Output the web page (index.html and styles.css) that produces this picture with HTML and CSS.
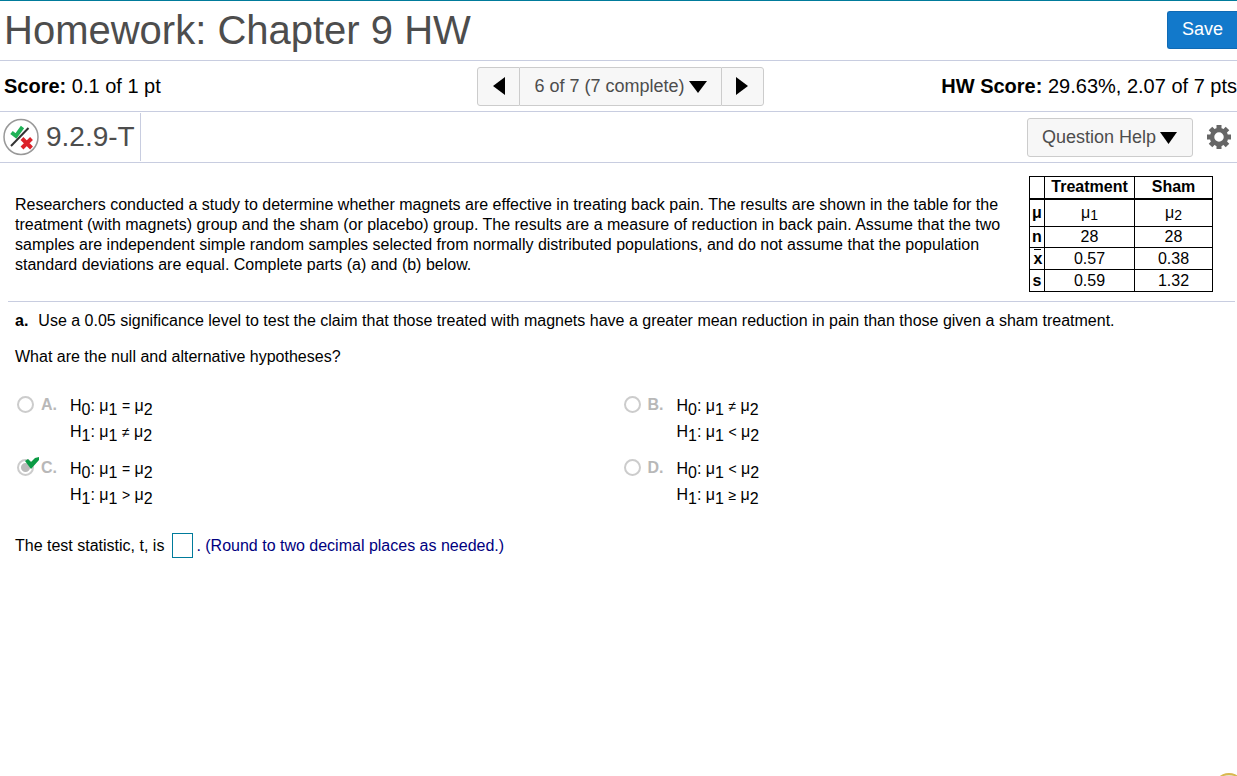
FILE: index.html
```html
<!DOCTYPE html>
<html lang="en">
<head>
    <meta charset="utf-8">
    <title>Homework: Chapter 9 HW</title>
    <link rel="stylesheet" href="styles.css">
</head>
<body>
    <header class="header">
        <h1 class="header__title">Homework: Chapter 9 HW</h1>
        <button type="button" class="save">Save</button>
    </header>

    <div class="scorebar">
        <div class="score"><b>Score:</b> 0.1 of 1 pt</div>
        <nav class="pager">
            <button type="button" class="pager__btn" aria-label="Previous question">
                <svg width="12" height="18" viewBox="0 0 12 18"><path d="M12 0v18L0 9z"/></svg>
            </button>
            <button type="button" class="pager__btn pager__btn--current">
                6 of 7 (7 complete)
                <svg class="caret" width="18" height="12" viewBox="0 0 18 12"><path d="M0 0h18L9 12z"/></svg>
            </button>
            <button type="button" class="pager__btn" aria-label="Next question">
                <svg width="12" height="18" viewBox="0 0 12 18"><path d="M0 0v18l12-9z"/></svg>
            </button>
        </nav>
        <div class="score score--hw"><b>HW Score:</b> 29.63%, 2.07 of 7 pts</div>
    </div>

    <div class="questionbar">
        <div class="question">
            <svg class="question__icon" width="36" height="38" viewBox="0 0 36 38">
                <ellipse cx="18" cy="19" rx="17" ry="17.500" fill="#fff" stroke="#999" stroke-width="1.500"/>
                <path d="M8.500 14.500l4.500 3.500 6.500-9" fill="none" stroke="#1fb257" stroke-width="4"/>
                <path d="M8 28L25.500 10" stroke="#333" stroke-width="2"/>
                <path d="M19 20.500l9.500 9.500M28.500 20.500L19 30" stroke="#dc2229" stroke-width="4"/>
            </svg>
            <h2 class="question__title">9.2.9-T</h2>
        </div>
        <div class="tools">
            <button type="button" class="help">
                Question Help
                <svg class="caret" width="17" height="12" viewBox="0 0 17 12"><path d="M0 0h17L8.500 12z"/></svg>
            </button>
            <button type="button" class="settings" aria-label="Settings">
                <svg width="26" height="26" viewBox="-13 -13 26 26">
                    <g stroke="#666" stroke-width="5">
                        <path d="M0-12V-7M0 12V7M-12 0H-7M12 0H7"/>
                        <path d="M-8.500-8.500L-5-5M8.500-8.500L5-5M-8.500 8.500L-5 5M8.500 8.500L5 5"/>
                    </g>
                    <circle r="7" fill="none" stroke="#666" stroke-width="4.500"/>
                </svg>
            </button>
        </div>
    </div>

    <main class="content">
        <section class="intro">
            <p class="intro__text">Researchers conducted a study to determine whether magnets are effective in treating back pain. The results are shown in the table for the treatment (with magnets) group and the sham (or placebo) group. The results are a measure of reduction in back pain. Assume that the two samples are independent simple random samples selected from normally distributed populations, and do not assume that the population standard deviations are equal. Complete parts (a) and (b) below.</p>
            <table class="data">
                <thead>
                    <tr><th></th><th scope="col">Treatment</th><th scope="col">Sham</th></tr>
                </thead>
                <tbody>
                    <tr class="data__mu"><th scope="row">μ</th><td>μ<sub>1</sub></td><td>μ<sub>2</sub></td></tr>
                    <tr class="data__n"><th scope="row">n</th><td>28</td><td>28</td></tr>
                    <tr><th scope="row"><span class="bar">x</span></th><td>0.57</td><td>0.38</td></tr>
                    <tr><th scope="row">s</th><td>0.59</td><td>1.32</td></tr>
                </tbody>
            </table>
        </section>

        <section class="part">
            <p><b class="part__label">a.</b>Use a 0.05 significance level to test the claim that those treated with magnets have a greater mean reduction in pain than those given a sham treatment.</p>
            <p id="prompt">What are the null and alternative hypotheses?</p>

            <div class="choices" role="radiogroup" aria-labelledby="prompt">
                <label class="choice">
                    <input type="radio" name="hypotheses" class="choice__radio" disabled>
                    <b class="choice__letter">A.</b>
                    <span class="choice__math">
                        <span>H<sub>0</sub>: μ<sub>1</sub> <i>=</i> μ<sub>2</sub></span>
                        <span>H<sub>1</sub>: μ<sub>1</sub> <i>≠</i> μ<sub>2</sub></span>
                    </span>
                </label>
                <label class="choice">
                    <input type="radio" name="hypotheses" class="choice__radio" disabled>
                    <b class="choice__letter">B.</b>
                    <span class="choice__math">
                        <span>H<sub>0</sub>: μ<sub>1</sub> <i>≠</i> μ<sub>2</sub></span>
                        <span>H<sub>1</sub>: μ<sub>1</sub> <i>&lt;</i> μ<sub>2</sub></span>
                    </span>
                </label>
                <label class="choice">
                    <input type="radio" name="hypotheses" class="choice__radio" checked disabled>
                    <svg class="choice__check" width="14" height="13" viewBox="0 0 14 13"><path d="M0 4l3-2 3 3 4-4 4-1v3L6 12z" fill="#0a9a44"/></svg>
                    <b class="choice__letter">C.</b>
                    <span class="choice__math">
                        <span>H<sub>0</sub>: μ<sub>1</sub> <i>=</i> μ<sub>2</sub></span>
                        <span>H<sub>1</sub>: μ<sub>1</sub> <i>&gt;</i> μ<sub>2</sub></span>
                    </span>
                </label>
                <label class="choice">
                    <input type="radio" name="hypotheses" class="choice__radio" disabled>
                    <b class="choice__letter">D.</b>
                    <span class="choice__math">
                        <span>H<sub>0</sub>: μ<sub>1</sub> <i>&lt;</i> μ<sub>2</sub></span>
                        <span>H<sub>1</sub>: μ<sub>1</sub> <i>≥</i> μ<sub>2</sub></span>
                    </span>
                </label>
            </div>

            <div class="answer">
                <label for="statistic">The test statistic, t, is</label>
                <input type="text" id="statistic" class="answer__input">
                <span class="answer__hint">. (Round to two decimal places as needed.)</span>
            </div>
        </section>
    </main>

    <div class="badge"></div>
</body>
</html>
```
FILE: styles.css
```css
* {
    box-sizing: border-box;
}

body {
    margin: 0;
    border-top: 1px solid #007b9b;
    font-family: "Liberation Sans", Arial, sans-serif;
    font-size: 16px;
    line-height: 20px;
    color: #000;
    background: #fff;
}

h1, h2, p {
    margin: 0;
    font-weight: 400;
}

button {
    font-family: inherit;
    font-size: 18px;
    cursor: pointer;
}

.header {
    display: flex;
    align-items: center;
    justify-content: space-between;
    height: 60px;
    padding: 0 0 2px 4px;
    border-bottom: 1px solid #c8cde0;
}

.header__title {
    font-size: 40px;
    line-height: 56px;
    color: #4d4d4d;
}

.save {
    width: 70px;
    height: 38px;
    color: #fff;
    background: #1279cb;
    border: 1px solid #0f6ab4;
    border-right: none;
    border-radius: 3px 0 0 3px;
}

.scorebar {
    display: grid;
    grid-template-columns: 1fr auto 1fr;
    align-items: center;
    height: 51px;
    padding-left: 4px;
    border-bottom: 1px solid #c8cde0;
}

.score {
    font-size: 20px;
}

.score--hw {
    text-align: right;
}

.pager {
    display: flex;
}

.pager__btn {
    display: flex;
    align-items: center;
    justify-content: center;
    gap: 4px;
    width: 43px;
    height: 39px;
    padding: 0;
    color: #4d4d4d;
    background: #f7f7f7;
    border: 1px solid #ccc;
    border-radius: 0 3px 3px 0;
}

.pager__btn:first-child {
    border-radius: 3px 0 0 3px;
}

.pager__btn--current {
    width: auto;
    padding: 0 14px;
    border-width: 1px 0;
    border-radius: 0;
}

.caret {
    margin-top: 2px;
}

.questionbar {
    display: flex;
    justify-content: space-between;
    height: 51px;
    border-bottom: 1px solid #c8cde0;
}

.question {
    display: flex;
    align-items: center;
    gap: 7px;
    margin: 1px 0;
    padding: 0 5px 0 3px;
    border-right: 1px solid #c8cde0;
}

.question__title {
    font-size: 28px;
    line-height: 32px;
    color: #4d4d4d;
}

.tools {
    display: flex;
    align-items: center;
    gap: 13px;
    padding-right: 5px;
}

.help {
    display: flex;
    align-items: center;
    gap: 4px;
    height: 39px;
    padding: 0 15px 0 14px;
    color: #4d4d4d;
    background: #f7f7f7;
    border: 1px solid #ccc;
    border-radius: 3px;
}

.settings {
    display: flex;
    padding: 0;
    background: none;
    border: none;
}

.content {
    padding: 13px 2px 0 8px;
}

.intro {
    display: flex;
    align-items: flex-start;
    justify-content: space-between;
    padding: 0 22px 9px 7px;
    border-bottom: 1px solid #c8cde0;
}

.intro__text {
    flex: 1;
    padding: 19px 10px 0 0;
}

.data {
    border-collapse: collapse;
    text-align: center;
}

.data th,
.data td {
    height: 22px;
    padding: 0;
    border: 1px solid #000;
}

.data thead th {
    border-bottom-width: 2px;
}

.data th:first-child {
    width: 15px;
}

.data th:nth-child(2) {
    width: 90px;
}

.data th:nth-child(3) {
    width: 78px;
}

.data .data__mu th,
.data .data__mu td {
    height: 28px;
}

.data .data__n th,
.data .data__n td {
    height: 21px;
}

.data sub {
    font-size: 14px;
    vertical-align: -2px;
}

.bar {
    display: block;
    width: 7px;
    margin: 0 auto;
    line-height: 18px;
    border-top: 1px solid #000;
}

sub {
    font-size: 16px;
    line-height: 0;
    vertical-align: -4px;
}

.part {
    padding: 9px 7px 0;
}

.part p {
    margin-bottom: 16px;
}

.part__label {
    margin-right: 10px;
}

.choices {
    display: grid;
    grid-template-columns: 1fr 1fr;
    row-gap: 13px;
    padding-top: 12px;
}

.choice {
    display: flex;
    position: relative;
    align-items: flex-start;
}

.choice__radio {
    appearance: none;
    flex: none;
    width: 17px;
    height: 17px;
    margin: 1px 7px 0 2px;
    border: 2px solid #ccc;
    border-radius: 50%;
}

.choice__radio:checked {
    background: radial-gradient(circle, #bbb 4px, #fff 5px);
}

/* sits over the corner of the selected radio */
.choice__check {
    position: absolute;
    left: 10px;
    top: -1px;
}

.choice__letter {
    width: 29px;
    color: #b8b8b8;
}

.choice__math {
    margin-top: -2px;
    line-height: 25px;
}

.choice__math span {
    display: block;
    height: 26px;
}

.choice__math i {
    font-size: 14px;
    font-style: normal;
}

.answer {
    display: flex;
    align-items: center;
    margin-top: 25px;
}

.answer__input {
    width: 21px;
    height: 25px;
    margin: 0 3px 0 8px;
    padding: 0 2px;
    font-family: inherit;
    font-size: 16px;
    border: 1px solid #007b9b;
}

.answer__hint {
    color: #000080;
}

/* floating bubble peeking in from the bottom edge */
.badge {
    position: fixed;
    right: -8px;
    bottom: -29px;
    width: 32px;
    height: 32px;
    border: 2px solid #d9b84f;
    border-radius: 50%;
    background: #e8e0cc;
}
```
